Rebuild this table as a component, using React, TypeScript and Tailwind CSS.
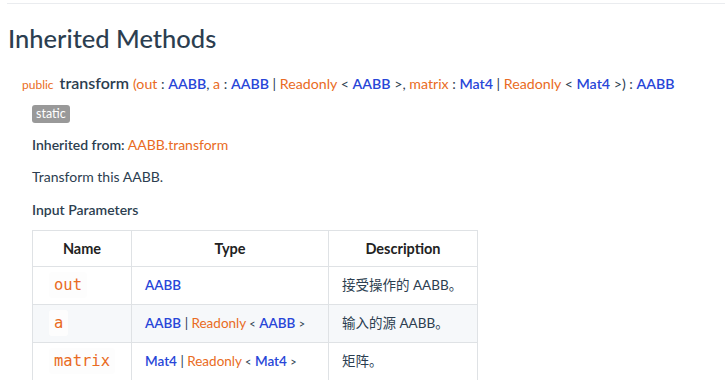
import React from "react";

const O = ({ children }: { children: React.ReactNode }) => (
  <span className="text-[#e96b23]">{children}</span>
);
const B = ({ children }: { children: React.ReactNode }) => (
  <span className="font-semibold text-[#2846d8]">{children}</span>
);

const Code = ({ children }: { children: React.ReactNode }) => (
  <code className="rounded-[3px] bg-[#fdfdfd] px-[5px] py-[4px] font-['DejaVu_Sans_Mono',monospace] text-[15.5px] text-[#e96b23]">
    {children}
  </code>
);

export default function App() {
  return (
    <div className="h-[380px] w-[725px] overflow-hidden bg-white font-['Lato','Noto_Sans_CJK_SC',sans-serif] text-[#2c3e50]">
      <div className="ml-[7px] mt-[3px] border-t border-[#eaecef]" />
      <h2 className="ml-[8px] mt-[18px] text-[25.5px] font-medium leading-[32px] text-[#2c3e50]">
        Inherited Methods
      </h2>
      <div className="ml-[22px] mt-[19px] flex items-baseline text-[14.2px] leading-[20px] text-[#2c3e50]">
        <span className="mr-[6px] text-[12px] text-[#e96b23]">public</span>
        <span className="mr-[4px] text-[16px] font-semibold text-[#2c3e50]">transform</span>
        <span>
          <O>(out</O> : <B>AABB</B>, <O>a</O> : <B>AABB</B> | <O>Readonly</O> &lt; <B>AABB</B> &gt;,{" "}
          <O>matrix</O> : <B>Mat4</B> | <O>Readonly</O> &lt; <B>Mat4</B> &gt;) : <B>AABB</B>
        </span>
      </div>
      <div className="ml-[32px] mt-[10px] flex">
        <span className="rounded-[3px] bg-[#999999] px-[4px] text-[12.5px] leading-[18px] text-white">static</span>
      </div>
      <div className="ml-[32px] mt-[12px] text-[14px] leading-[20px]">
        <span className="font-semibold">Inherited from:</span> <O>AABB.transform</O>
      </div>
      <p className="ml-[32px] mt-[12px] text-[14px] leading-[20px]">Transform this AABB.</p>
      <div className="ml-[32px] mt-[13px] text-[14px] font-semibold leading-[20px]">Input Parameters</div>
      <table className="ml-[32px] mt-[10px] w-[446px] border-collapse text-[13.5px] text-[#2c3e50]">
        <thead>
          <tr className="h-[36px] text-[14.5px]">
            <th className="w-[99px] border border-[#dfe2e5] font-bold text-[#222]">Name</th>
            <th className="w-[197px] border border-[#dfe2e5] font-bold text-[#222]">Type</th>
            <th className="border border-[#dfe2e5] font-bold text-[#222]">Description</th>
          </tr>
        </thead>
        <tbody>
          <tr className="h-[38px]">
            <td className="border border-[#dfe2e5] px-[16px]"><Code>out</Code></td>
            <td className="border border-[#dfe2e5] px-[13px]"><B>AABB</B></td>
            <td className="border border-[#dfe2e5] px-[13px]">接受操作的 AABB。</td>
          </tr>
          <tr className="h-[38px] bg-[#f6f8fa]">
            <td className="border border-[#dfe2e5] px-[16px]"><Code>a</Code></td>
            <td className="border border-[#dfe2e5] px-[13px]">
              <B>AABB</B> | <O>Readonly</O> <span className="text-[11px]">&lt;</span> <B>AABB</B>{" "}
              <span className="text-[11px]">&gt;</span>
            </td>
            <td className="border border-[#dfe2e5] px-[13px]">输入的源 AABB。</td>
          </tr>
          <tr className="h-[38px]">
            <td className="border border-[#dfe2e5] px-[16px]"><Code>matrix</Code></td>
            <td className="border border-[#dfe2e5] px-[13px]">
              <B>Mat4</B> | <O>Readonly</O> <span className="text-[11px]">&lt;</span> <B>Mat4</B>{" "}
              <span className="text-[11px]">&gt;</span>
            </td>
            <td className="border border-[#dfe2e5] px-[13px]">矩阵。</td>
          </tr>
        </tbody>
      </table>
    </div>
  );
}
